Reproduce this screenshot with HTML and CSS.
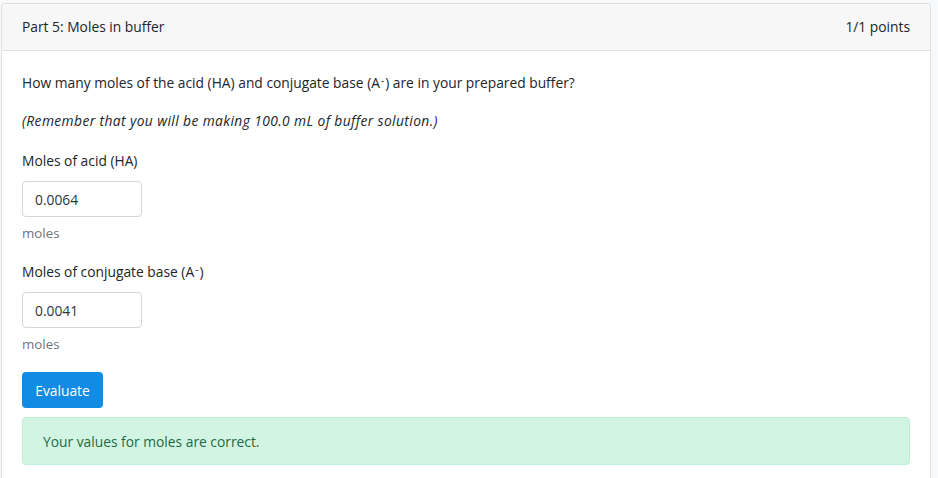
FILE: index.html
```html
<!DOCTYPE html>
<html lang="en">
<head>
    <meta charset="UTF-8">
    <meta name="viewport" content="width=device-width, initial-scale=1.0">
    <title>Part 5: Moles in buffer</title>
    <link rel="stylesheet" href="styles.css">
</head>
<body>
    <div class="card">
        <div class="card-header">
            <span>Part 5: Moles in buffer</span>
            <span>1/1 points</span>
        </div>

        <div class="card-body">
            <p class="question">How many moles of the acid (HA) and conjugate base (A<sup>-</sup>) are in your prepared buffer?</p>
            <p class="note">(Remember that you will be making 100.0 mL of buffer solution.)</p>

            <div class="field">
                <label for="moles-acid">Moles of acid (HA)</label>
                <input type="text" id="moles-acid" value="0.0064">
                <div class="help">moles</div>
            </div>

            <div class="field">
                <label for="moles-base">Moles of conjugate base (A<sup>-</sup>)</label>
                <input type="text" id="moles-base" value="0.0041">
                <div class="help">moles</div>
            </div>

            <button class="btn-evaluate">Evaluate</button>

            <div class="alert-success">
                Your values for moles are correct.
            </div>
        </div>
    </div>
</body>
</html>
```

FILE: styles.css
```css
body {
    font-family: "Open Sans", Lato, sans-serif;
    font-size: 13.8px;
    color: #212529;
    margin: 0;
    padding: 3px 7px 0 1px;
    background-color: #f8f9fb;
}

.card {
    background-color: #fff;
    border: 1px solid #dfdfdf;
    border-bottom: none;
    border-radius: 4px 4px 0 0;
    height: 500px;
}

.card-header {
    display: flex;
    justify-content: space-between;
    padding: 12px 20px;
    line-height: 22px;
    background-color: #f7f7f7;
    border-bottom: 1px solid #e2e2e2;
    border-radius: 4px 4px 0 0;
}

.card-body {
    padding: 20px 20px 0 20px;
}

.card-body p {
    margin: 0 0 14px 0;
    line-height: 24px;
}

.card-body .note {
    font-style: italic;
    letter-spacing: 0.4px;
    margin-bottom: 16px;
}

sup {
    font-size: 10px;
    line-height: 0;
    vertical-align: 4px;
    margin: 0 1px;
}

.field {
    margin-bottom: 15px;
}

.field label {
    display: block;
    line-height: 24px;
    margin-bottom: 8px;
}

.field input {
    display: block;
    width: 120px;
    height: 36px;
    box-sizing: border-box;
    padding: 0 12px;
    border: 1px solid #d3d6da;
    border-radius: 4px;
    font-family: inherit;
    font-size: 13.8px;
    color: #333;
}

.field .help {
    margin-top: 4px;
    line-height: 24px;
    font-size: 13.3px;
    color: #6c757d;
}

.btn-evaluate {
    display: block;
    margin-top: 16px;
    height: 36px;
    width: 81px;
    padding: 0;
    border: none;
    border-radius: 4px;
    background-color: #118be3;
    color: #fff;
    font-family: inherit;
    font-size: 13.8px;
}

.alert-success {
    margin-top: 9px;
    height: 48px;
    box-sizing: border-box;
    padding: 0 20px;
    display: flex;
    align-items: center;
    background-color: #d2f5e3;
    border: 1px solid #bfeed5;
    border-radius: 4px;
    color: #1d6a43;
}
```
